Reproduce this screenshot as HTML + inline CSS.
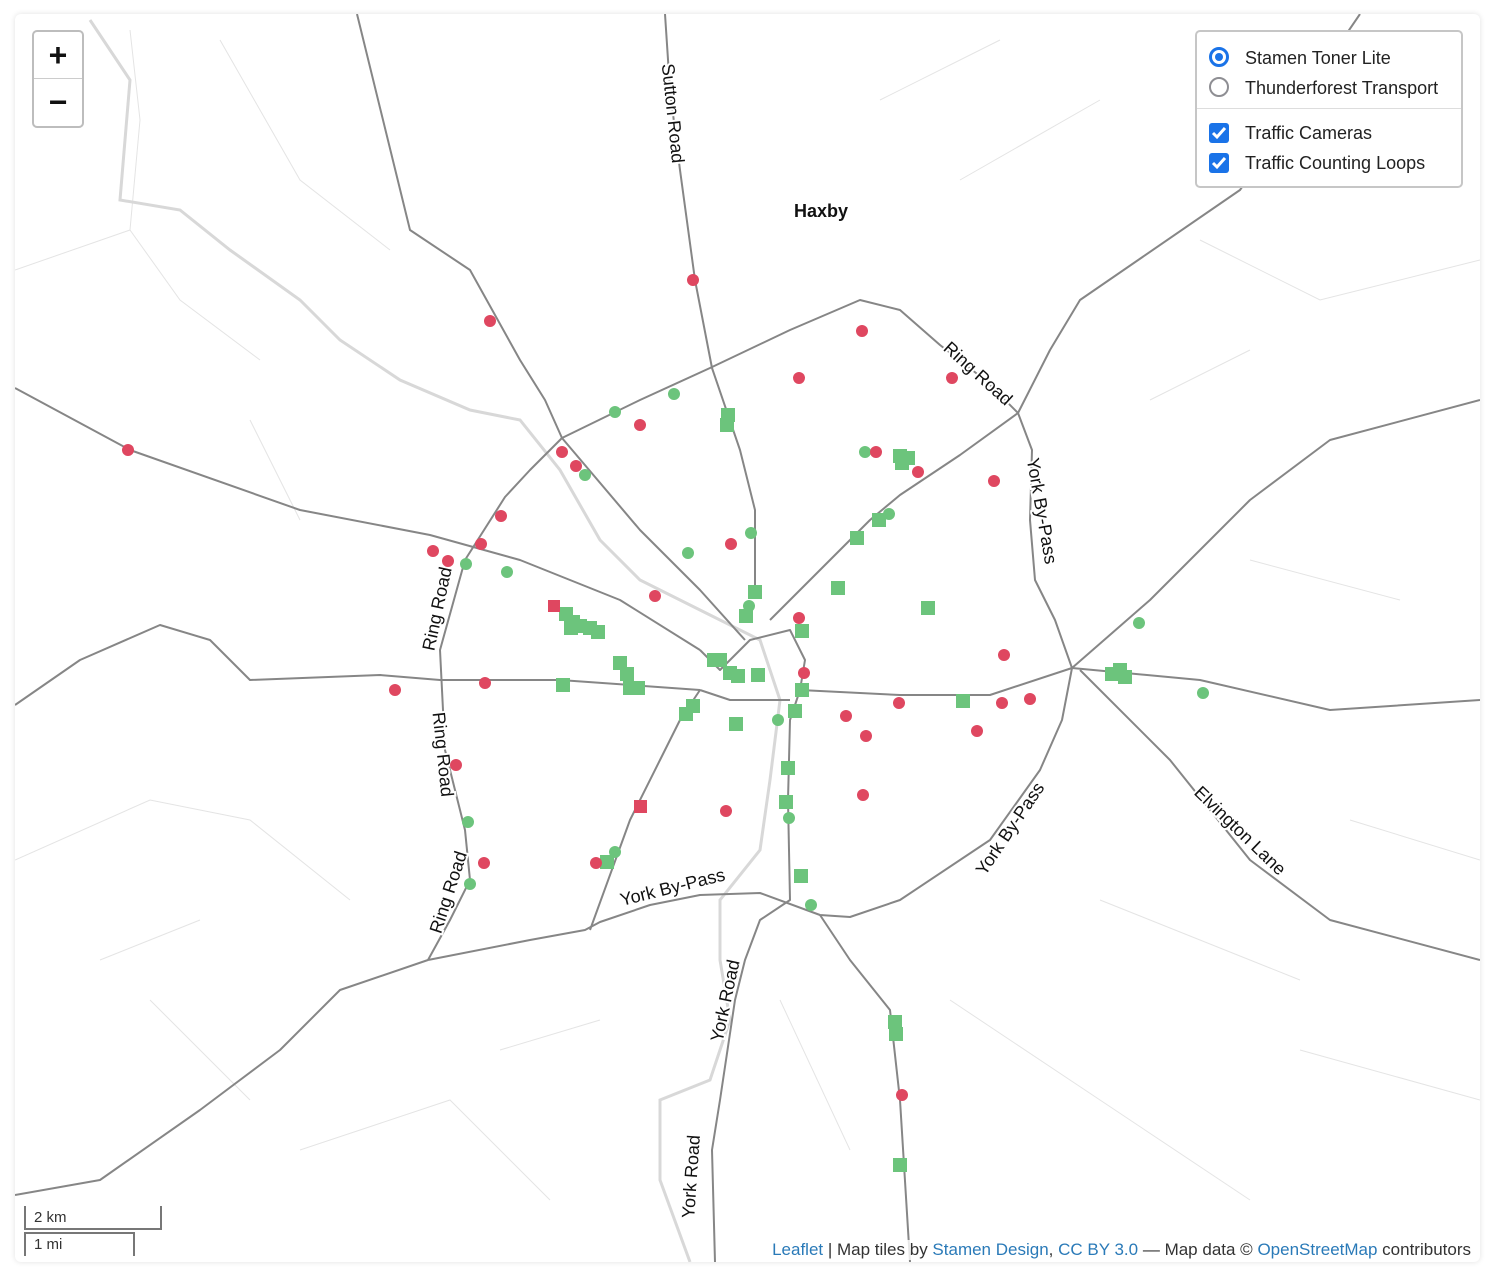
<!DOCTYPE html>
<html><head><meta charset="utf-8"><style>
html,body{margin:0;padding:0;background:#fff;width:1504px;height:1274px;overflow:hidden;font-family:"Liberation Sans",sans-serif}
#map{position:absolute;left:15px;top:14px;width:1465px;height:1248px;border-radius:6px;box-shadow:0 0 6px rgba(0,0,0,.12);overflow:hidden;background:#fff}
svg{position:absolute;left:-15px;top:-14px}
.zoom{position:absolute;left:17px;top:16px;width:48px;height:94px;border:2px solid #bdbdbd;border-radius:5px;background:#fff}
.zoom div{height:46px;text-align:center;font-size:32px;line-height:46px;color:#111;font-weight:bold}
.zoom div:first-child{border-bottom:1px solid #ccc}
.layers{position:absolute;left:1180px;top:16px;width:264px;height:154px;border:2px solid #c6c6c6;border-radius:5px;background:#fff;font-size:18px;color:#222}
.row{position:absolute;left:12px;height:24px;line-height:24px}
.row span{position:absolute;left:36px;white-space:nowrap}
.rad{position:absolute;left:0;top:1px;width:16px;height:16px;border-radius:50%;border:2px solid #8e8e93}
.rad.on{border:3px solid #1a73e8;width:14px;height:14px}
.rad.on:after{content:"";position:absolute;left:3px;top:3px;width:8px;height:8px;border-radius:50%;background:#1a73e8}
.chk{position:absolute;left:0;top:2px;width:20px;height:20px;border-radius:3px;background:#1a73e8}
.sep{position:absolute;left:0;right:0;top:76px;border-top:1px solid #ddd}
.attr{position:absolute;right:8px;bottom:2px;font-size:17px;color:#333;background:rgba(255,255,255,.8);padding:0 1px}
.attr a{color:#2a7ab8;text-decoration:none}
.scale{position:absolute;font-size:15px;color:#333;border:2px solid #777;background:rgba(255,255,255,.6);padding-left:8px;box-sizing:border-box}
</style></head><body>
<div id="map">
<svg width="1504" height="1274" viewBox="0 0 1504 1274">
<g fill="none" stroke="#e4e4e4" stroke-width="1">
<path d="M130,30 L140,120 L130,230 L180,300 L260,360 M15,270 L130,230 M220,40 L300,180 L390,250 M250,420 L300,520 M15,860 L150,800 L250,820 L350,900 M100,960 L200,920 M150,1000 L250,1100 M1200,240 L1320,300 L1480,260 M1150,400 L1250,350 M1250,560 L1400,600 M1350,820 L1480,860 M1100,900 L1300,980 M950,1000 L1100,1100 L1250,1200 M1300,1050 L1480,1100 M300,1150 L450,1100 L550,1200 M500,1050 L600,1020 M780,1000 L850,1150 M960,180 L1100,100 M880,100 L1000,40"/>
</g>
<g fill="none" stroke="#d8d8d8" stroke-width="3">
<path d="M90,20 L130,80 L120,200 L180,210 L230,250 L300,300 L340,340 L400,380 L470,410 L520,420 L560,470 L600,540 L640,580 L700,610 L760,640 L780,700 L770,780 L760,850 L720,900 L720,960 L730,1020 L710,1080 L660,1100 L660,1180 L690,1262"/>
</g>
<g fill="none" stroke="#868686" stroke-width="2" stroke-linejoin="round">
<path d="M562,438 L640,400 L710,368 L790,330 L860,300 L900,310 L940,345 L985,380 L1018,413 L1032,450 L1030,520 L1035,580 L1055,620 L1072,668 L1062,720 L1040,770 L990,840 L900,900 L850,917 L820,915 L760,893 L700,895 L650,905 L600,922 L585,930 L530,940 L428,960"/>
<path d="M562,438 L530,470 L505,497 L465,560 L440,650 L445,750 L465,830 L470,880 L450,920 L428,960"/>
<path d="M665,14 L670,90 L680,170 L695,280 L712,368 L740,450 L755,510 L755,590"/>
<path d="M357,14 L410,230 L470,270 L520,360 L545,400 L562,438 L640,530 L700,590 L745,640"/>
<path d="M15,388 L130,450 L300,510 L430,535 L520,560 L620,600 L700,650"/>
<path d="M15,705 L80,660 L160,625 L210,640 L250,680 L380,675 L440,680 L560,680 L700,690"/>
<path d="M15,1195 L100,1180 L200,1110 L280,1050 L340,990 L428,960"/>
<path d="M715,1262 L712,1150 L720,1100 L735,1000 L745,960 L760,920 L790,900 L788,800 L790,720 L800,690"/>
<path d="M820,915 L850,960 L890,1010 L900,1100 L910,1262"/>
<path d="M590,930 L630,820 L660,760 L680,720 L700,690"/>
<path d="M1360,14 L1240,190 L1080,300 L1050,350 L1018,413"/>
<path d="M1018,413 L960,455 L900,495 L870,520 L800,590 L770,620"/>
<path d="M800,690 L900,695 L990,695 L1072,668 L1200,680 L1330,710 L1480,700"/>
<path d="M1072,668 L1150,600 L1250,500 L1330,440 L1480,400"/>
<path d="M1080,670 L1170,760 L1250,860 L1330,920 L1480,960"/>
<path d="M700,650 L720,670 L750,640 L790,630 L805,660 L800,690 M700,690 L730,700 L790,700"/>
</g>
<g font-family="Liberation Sans,sans-serif" font-size="18" fill="#111" stroke="#fff" stroke-width="4" paint-order="stroke" text-anchor="middle">
<text x="821" y="217" font-weight="bold">Haxby</text>
<text transform="translate(667,114) rotate(84)">Sutton Road</text>
<text transform="translate(974,378) rotate(42)">Ring Road</text>
<text transform="translate(1036,512) rotate(80)">York By-Pass</text>
<text transform="translate(443,610) rotate(-78)">Ring Road</text>
<text transform="translate(437,755) rotate(84)">Ring Road</text>
<text transform="translate(454,894) rotate(-72)">Ring Road</text>
<text transform="translate(674,893) rotate(-14)">York By-Pass</text>
<text transform="translate(1015,832) rotate(-56)">York By-Pass</text>
<text transform="translate(1236,835) rotate(44)">Elvington Lane</text>
<text transform="translate(731,1002) rotate(-78)">York Road</text>
<text transform="translate(697,1177) rotate(-86)">York Road</text>
</g>
<g fill="#6cc47c">
<circle cx="674" cy="394" r="6"/><circle cx="615" cy="412" r="6"/><circle cx="585" cy="475" r="6"/><circle cx="865" cy="452" r="6"/><circle cx="889" cy="514" r="6"/><circle cx="751" cy="533" r="6"/><circle cx="688" cy="553" r="6"/><circle cx="466" cy="564" r="6"/><circle cx="507" cy="572" r="6"/><circle cx="1139" cy="623" r="6"/><circle cx="778" cy="720" r="6"/><circle cx="1203" cy="693" r="6"/><circle cx="468" cy="822" r="6"/><circle cx="789" cy="818" r="6"/><circle cx="615" cy="852" r="6"/><circle cx="470" cy="884" r="6"/><circle cx="811" cy="905" r="6"/><circle cx="749" cy="606" r="6"/>
</g>
<g fill="#6cc47c" transform="translate(-1,-1)">
<rect x="722" y="409" width="14" height="14"/><rect x="721" y="419" width="14" height="14"/><rect x="894" y="450" width="14" height="14"/><rect x="902" y="452" width="14" height="14"/><rect x="896" y="457" width="14" height="14"/><rect x="873" y="514" width="14" height="14"/><rect x="851" y="532" width="14" height="14"/><rect x="832" y="582" width="14" height="14"/><rect x="749" y="586" width="14" height="14"/><rect x="740" y="610" width="14" height="14"/><rect x="796" y="625" width="14" height="14"/><rect x="922" y="602" width="14" height="14"/><rect x="560" y="608" width="14" height="14"/><rect x="567" y="616" width="14" height="14"/><rect x="574" y="620" width="14" height="14"/><rect x="584" y="622" width="14" height="14"/><rect x="592" y="626" width="14" height="14"/><rect x="565" y="622" width="14" height="14"/><rect x="614" y="657" width="14" height="14"/><rect x="621" y="668" width="14" height="14"/><rect x="708" y="654" width="14" height="14"/><rect x="714" y="654" width="14" height="14"/><rect x="724" y="667" width="14" height="14"/><rect x="732" y="670" width="14" height="14"/><rect x="752" y="669" width="14" height="14"/><rect x="557" y="679" width="14" height="14"/><rect x="624" y="682" width="14" height="14"/><rect x="632" y="682" width="14" height="14"/><rect x="796" y="684" width="14" height="14"/><rect x="957" y="695" width="14" height="14"/><rect x="687" y="700" width="14" height="14"/><rect x="680" y="708" width="14" height="14"/><rect x="789" y="705" width="14" height="14"/><rect x="730" y="718" width="14" height="14"/><rect x="1106" y="668" width="14" height="14"/><rect x="1114" y="664" width="14" height="14"/><rect x="1119" y="671" width="14" height="14"/><rect x="782" y="762" width="14" height="14"/><rect x="780" y="796" width="14" height="14"/><rect x="795" y="870" width="14" height="14"/><rect x="601" y="856" width="14" height="14"/><rect x="889" y="1016" width="14" height="14"/><rect x="890" y="1028" width="14" height="14"/><rect x="894" y="1159" width="14" height="14"/>
</g>
<g fill="#df4760">
<circle cx="693" cy="280" r="6"/><circle cx="490" cy="321" r="6"/><circle cx="862" cy="331" r="6"/><circle cx="799" cy="378" r="6"/><circle cx="952" cy="378" r="6"/><circle cx="128" cy="450" r="6"/><circle cx="640" cy="425" r="6"/><circle cx="562" cy="452" r="6"/><circle cx="576" cy="466" r="6"/><circle cx="876" cy="452" r="6"/><circle cx="918" cy="472" r="6"/><circle cx="994" cy="481" r="6"/><circle cx="501" cy="516" r="6"/><circle cx="481" cy="544" r="6"/><circle cx="433" cy="551" r="6"/><circle cx="448" cy="561" r="6"/><circle cx="731" cy="544" r="6"/><circle cx="655" cy="596" r="6"/><circle cx="799" cy="618" r="6"/><circle cx="1004" cy="655" r="6"/><circle cx="804" cy="673" r="6"/><circle cx="395" cy="690" r="6"/><circle cx="485" cy="683" r="6"/><circle cx="899" cy="703" r="6"/><circle cx="1002" cy="703" r="6"/><circle cx="1030" cy="699" r="6"/><circle cx="846" cy="716" r="6"/><circle cx="866" cy="736" r="6"/><circle cx="977" cy="731" r="6"/><circle cx="456" cy="765" r="6"/><circle cx="863" cy="795" r="6"/><circle cx="726" cy="811" r="6"/><circle cx="484" cy="863" r="6"/><circle cx="596" cy="863" r="6"/><circle cx="902" cy="1095" r="6"/>
<rect x="548" y="600" width="12" height="12"/><rect x="634" y="800" width="13" height="13"/>
</g>
</svg>
<div class="zoom"><div>+</div><div>−</div></div>
<div class="layers">
<div class="row" style="top:14px"><i class="rad on"></i><span>Stamen Toner Lite</span></div>
<div class="row" style="top:44px"><i class="rad"></i><span>Thunderforest Transport</span></div>
<div class="sep"></div>
<div class="row" style="top:89px"><i class="chk"><svg width="20" height="20" style="position:static"><path d="M4,10 L8,14 L16,5" stroke="#fff" stroke-width="3" fill="none"/></svg></i><span>Traffic Cameras</span></div>
<div class="row" style="top:119px"><i class="chk"><svg width="20" height="20" style="position:static"><path d="M4,10 L8,14 L16,5" stroke="#fff" stroke-width="3" fill="none"/></svg></i><span>Traffic Counting Loops</span></div>
</div>
<div class="scale" style="left:9px;top:1192px;width:138px;height:24px;border-top:none;line-height:24px">2 km</div>
<div class="scale" style="left:9px;top:1218px;width:111px;height:24px;border-bottom:none;line-height:22px">1 mi</div>
<div class="attr"><a>Leaflet</a> | Map tiles by <a>Stamen Design</a>, <a>CC BY 3.0</a> — Map data © <a>OpenStreetMap</a> contributors</div>
</div>
</body></html>
